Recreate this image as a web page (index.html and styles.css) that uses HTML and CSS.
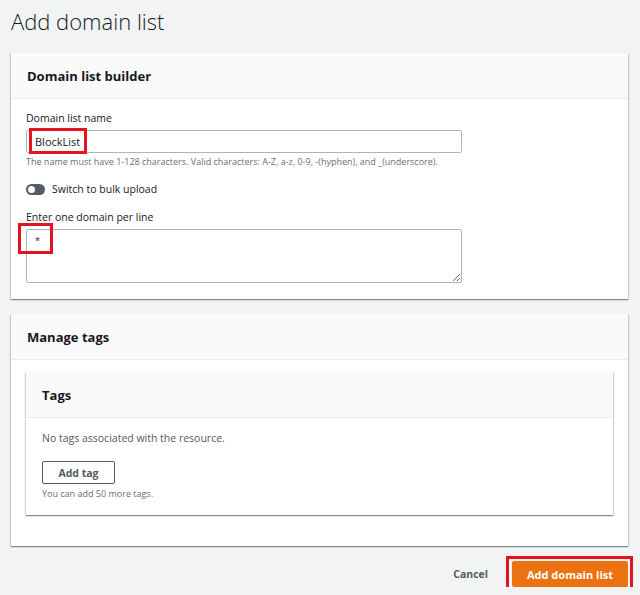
FILE: index.html
```html
<!DOCTYPE html>
<html lang="en">
<head>
<meta charset="utf-8">
<title>Add domain list</title>
<link rel="stylesheet" href="styles.css">
</head>
<body>
<div class="page">
  <h1 class="title">Add domain list</h1>

  <section class="card">
    <div class="card-header"><h2>Domain list builder</h2></div>
    <div class="card-body builder">
      <div class="field">
        <label class="label">Domain list name</label>
        <div class="input-wrap">
          <input class="input" type="text" value="BlockList">
          <span class="mark mark-name"></span>
        </div>
        <p class="hint">The name must have 1-128 characters. Valid characters: A-Z, a-z, 0-9, -(hyphen), and _(underscore).</p>
      </div>
      <div class="toggle-row">
        <span class="toggle"><span class="knob"></span></span>
        <span class="toggle-text">Switch to bulk upload</span>
      </div>
      <div class="field">
        <label class="label">Enter one domain per line</label>
        <div class="input-wrap">
          <textarea class="textarea">*</textarea>
          <span class="mark mark-domain"></span>
        </div>
      </div>
    </div>
  </section>

  <section class="card tags-card">
    <div class="card-header"><h2>Manage tags</h2></div>
    <div class="card-body outer">
      <div class="inner-card">
        <div class="card-header inner-header"><h3>Tags</h3></div>
        <div class="inner-body">
          <p class="empty">No tags associated with the resource.</p>
          <button class="btn-normal" type="button">Add tag</button>
          <p class="hint">You can add 50 more tags.</p>
        </div>
      </div>
    </div>
  </section>

  <div class="footer">
    <button class="btn-link" type="button">Cancel</button>
    <div class="primary-wrap">
      <button class="btn-primary" type="button">Add domain list</button>
      <span class="mark mark-submit"></span>
    </div>
  </div>
</div>
</body>
</html>
```

FILE: styles.css
```css
* { box-sizing: border-box; }

body {
  margin: 0;
  background: #f2f3f3;
  font-family: "Open Sans", "Liberation Sans", sans-serif;
  color: #16191f;
}

.page {
  padding: 0 12px 0 11px;
}

.title {
  margin: 0;
  height: 53px;
  padding-top: 6px;
  font-size: 22px;
  line-height: 30px;
  font-weight: 300;
  color: #16191f;
}

.card {
  background: #fff;
  box-shadow: 0 1px 1px 0 rgba(0, 28, 36, 0.3), 1px 1px 1px 0 rgba(0, 28, 36, 0.15), -1px 1px 1px 0 rgba(0, 28, 36, 0.15);
}

.card-header {
  height: 46px;
  display: flex;
  align-items: center;
  padding: 0 16px;
  background: #fafafa;
  border-bottom: 1px solid #eaeded;
}

.card-header h2,
.card-header h3 {
  margin: 0;
  font-size: 13px;
  font-weight: 700;
  color: #16191f;
}

.builder {
  padding: 12px 15px 16px;
  display: flex;
  flex-direction: column;
}

.field {
  display: flex;
  flex-direction: column;
}

.label {
  font-size: 10.5px;
  line-height: 14px;
  color: #16191f;
  margin-bottom: 5px;
}

.input-wrap {
  position: relative;
  width: 436px;
}

.input {
  display: block;
  width: 436px;
  height: 23px;
  border: 1px solid #aab7b8;
  border-radius: 2px;
  padding: 0 8px;
  font-family: inherit;
  font-size: 11px;
  color: #16191f;
  background: #fff;
}

.textarea {
  display: block;
  width: 436px;
  height: 54px;
  border: 1px solid #aab7b8;
  border-radius: 2px;
  padding: 4px 8px;
  font-family: inherit;
  font-size: 9px;
  color: #16191f;
  background: #fff;
  resize: vertical;
}

.hint {
  margin: 3px 0 0;
  font-size: 9px;
  line-height: 12px;
  color: #687078;
}

.toggle-row {
  display: flex;
  align-items: center;
  gap: 7px;
  margin-top: 15px;
  margin-bottom: 15px;
  height: 12px;
}

.toggle {
  position: relative;
  width: 19px;
  height: 11px;
  border-radius: 6px;
  background: #545b64;
}

.knob {
  position: absolute;
  left: 2px;
  top: 2px;
  width: 7px;
  height: 7px;
  border-radius: 50%;
  background: #fff;
}

.toggle-text {
  font-size: 10.5px;
  color: #16191f;
}

.mark {
  position: absolute;
  border: 3px solid #e3141f;
  pointer-events: none;
}

.mark-name { left: 3px; top: -2px; width: 58px; height: 26px; }
.mark-domain { left: -8px; top: -6px; width: 35px; height: 31px; }
.mark-submit { left: -6px; top: -5px; width: 127px; height: 35px; }

.tags-card {
  margin-top: 15px;
}

.outer {
  padding: 12px 15px 31px;
}

.inner-card {
  background: #fff;
  box-shadow: 0 1px 1px 0 rgba(0, 28, 36, 0.3), 1px 1px 1px 0 rgba(0, 28, 36, 0.15), -1px 1px 1px 0 rgba(0, 28, 36, 0.15);
}

.inner-header {
  height: 46px;
}

.inner-body {
  padding: 13px 16px 15px;
  display: flex;
  flex-direction: column;
  align-items: flex-start;
}

.empty {
  margin: 0;
  font-size: 10.5px;
  line-height: 14px;
  color: #545b64;
}

.btn-normal {
  margin-top: 16px;
  width: 73px;
  height: 23px;
  border: 1px solid #545b64;
  border-radius: 2px;
  background: #fff;
  font-family: inherit;
  font-size: 10.5px;
  font-weight: 700;
  color: #545b64;
  padding: 0;
}

.inner-body .hint {
  margin-top: 4px;
}

.footer {
  display: flex;
  justify-content: flex-end;
  align-items: center;
  gap: 24px;
  margin-top: 15px;
}

.btn-link {
  border: 0;
  background: transparent;
  font-family: inherit;
  font-size: 10.5px;
  font-weight: 700;
  color: #545b64;
  padding: 0;
}

.primary-wrap {
  position: relative;
}

.btn-primary {
  display: block;
  width: 116px;
  height: 26px;
  border: 1px solid #ec7211;
  border-radius: 2px;
  background: #ec7211;
  font-family: inherit;
  font-size: 11px;
  font-weight: 700;
  color: #fff;
  padding: 0;
}
```
